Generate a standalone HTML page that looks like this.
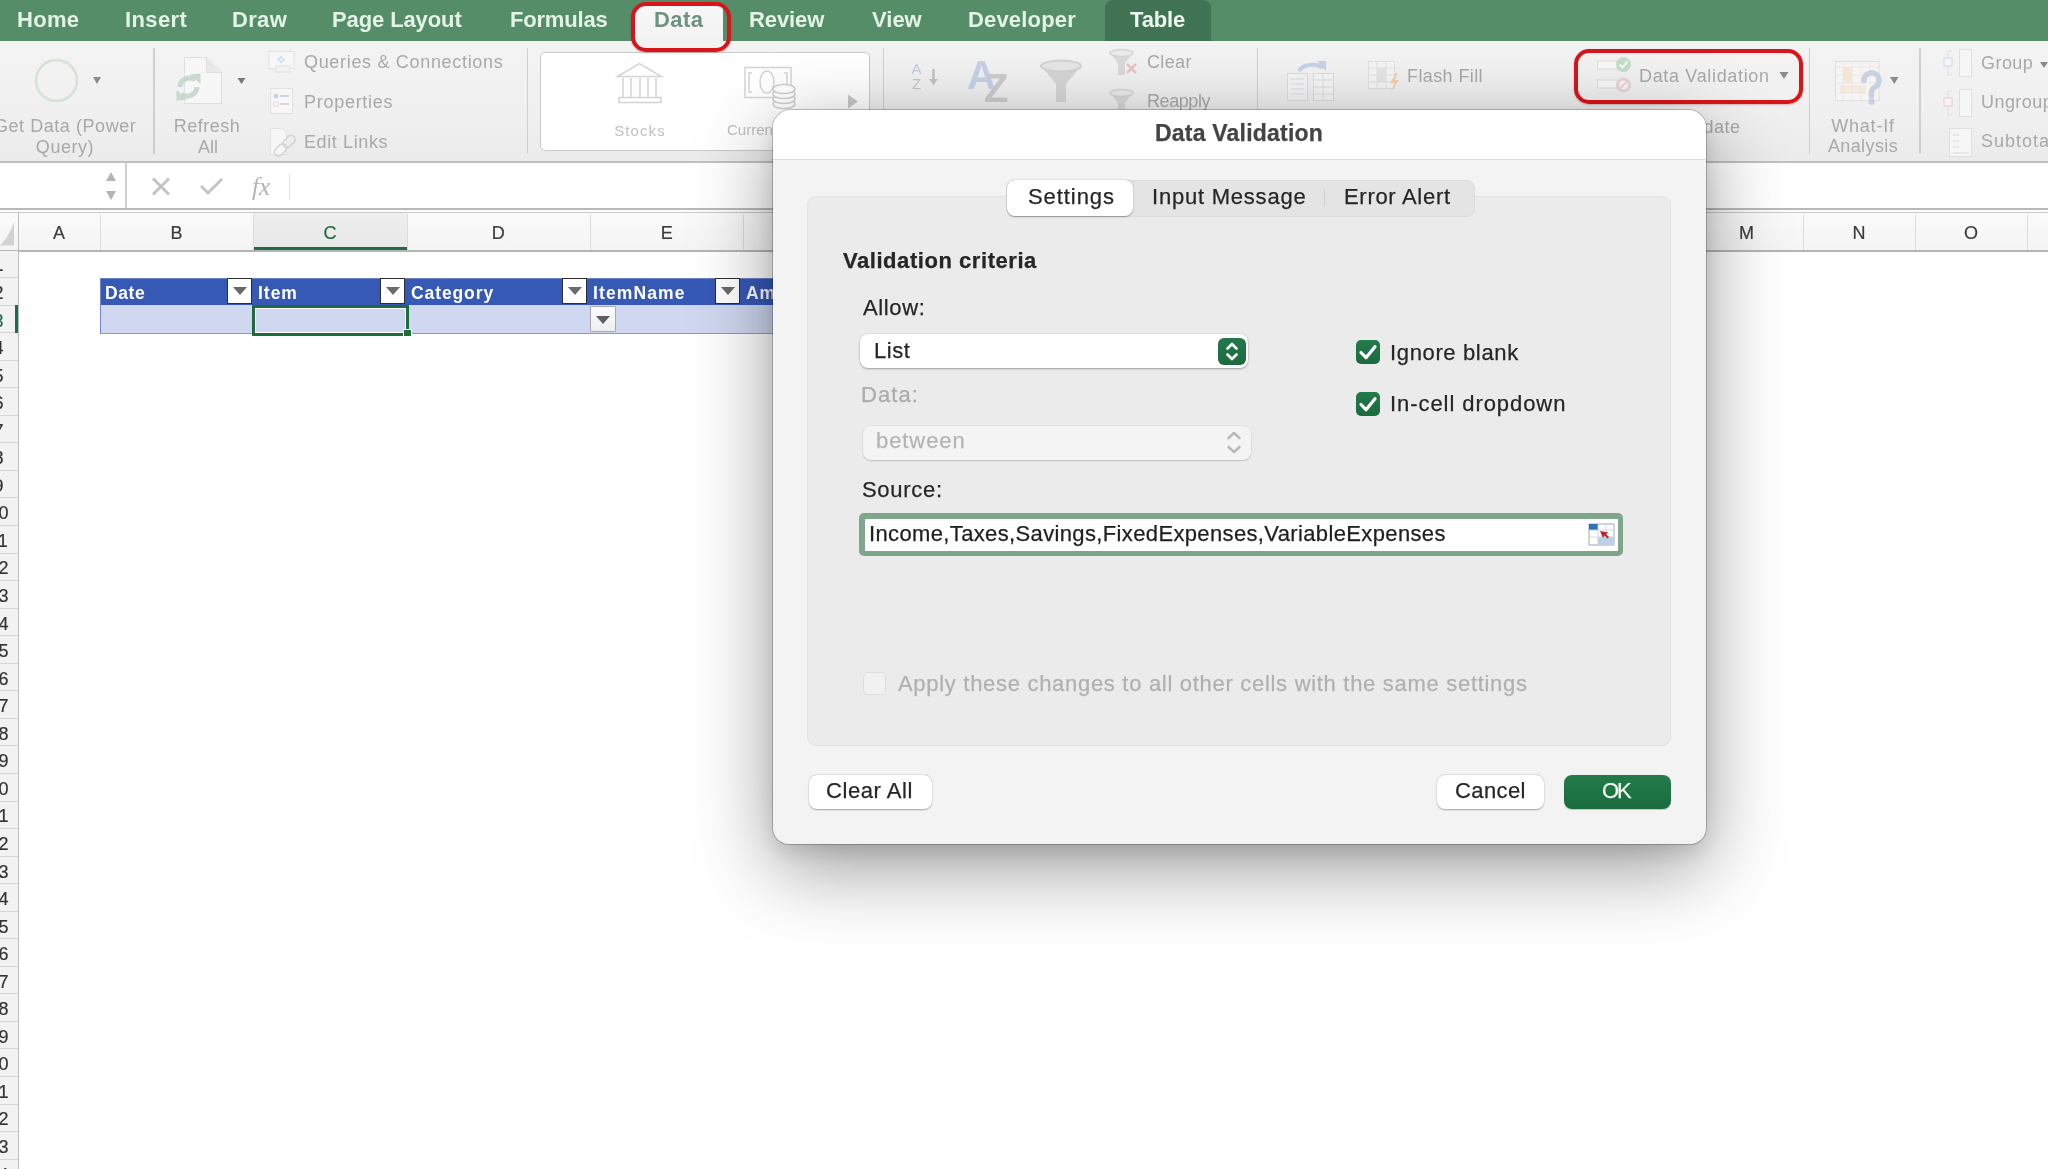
<!DOCTYPE html>
<html><head><meta charset="utf-8">
<style>
*{margin:0;padding:0;box-sizing:border-box}
html,body{width:2048px;height:1169px;overflow:hidden;background:#fff;font-family:"Liberation Sans",sans-serif}
.a{position:absolute}
.t{position:absolute;line-height:1;white-space:nowrap;will-change:transform}
#tabbar{left:0;top:0;width:2048px;height:41px;background:#558d69}
.tab{font-size:22px;font-weight:bold;color:#e3f3e6;top:8px}
#ribbon{left:0;top:41px;width:2048px;height:122px;background:linear-gradient(#f3f3f3,#f0f0f0 60%,#ebebeb);border-bottom:2px solid #c0c0c0}
.rl{font-size:18px;color:#a9a9a9}
.sep{position:absolute;width:1.5px;background:#cfcfcf}
#fbar{left:0;top:163px;width:2048px;height:46px;background:#fff}
#colhdr{left:0;top:208px;width:2048px;height:43px;background:linear-gradient(#fbfbfb,#f4f4f4);border-top:2px solid #b9b9b9}
.ch{font-size:18px;color:#3c3c3c;top:224px;-webkit-text-stroke:0.2px currentColor}
.csep{position:absolute;top:214px;height:36px;width:1px;background:#dcdcdc}
.rh{font-size:18px;color:#3c3c3c;-webkit-text-stroke:0.2px currentColor}
.th{font-size:17.5px;font-weight:bold;color:#fff;top:284px}
.fb{position:absolute;top:278px;width:25px;height:25.5px;background:#fff;border:1.2px solid #2e2e2e}
.fb:after{content:"";position:absolute;left:5px;top:8px;border-left:7px solid transparent;border-right:7px solid transparent;border-top:8px solid #6a6a6a}
.dt{font-size:22px;color:#262626;-webkit-text-stroke:0.25px currentColor}
.cb{position:absolute;width:24px;height:24px;border-radius:5px;background:linear-gradient(#237b4a,#1b6a3d)}
.btn{position:absolute;top:775px;height:34px;background:#fff;border-radius:8px;box-shadow:0 0.5px 1.5px rgba(0,0,0,.3),0 0 0 0.5px rgba(0,0,0,.06)}
</style></head><body>

<!-- TAB BAR -->
<div class="a" id="tabbar"></div>
<div class="a" style="left:1105px;top:0;width:106px;height:41px;background:#3f7353;border-radius:8px 8px 0 0"></div>
<div class="a" style="left:635px;top:3px;width:88px;height:45px;background:linear-gradient(#f8f8f8,#f1f1f1);border-radius:8px 8px 0 0"></div>
<div class="t tab" id="tHome" style="left:17.40px;top:8.68px;letter-spacing:0.30px">Home</div>
<div class="t tab" id="tInsert" style="left:125.30px;top:8.68px;letter-spacing:0.40px">Insert</div>
<div class="t tab" id="tDraw" style="left:232.00px;top:8.68px;letter-spacing:0.33px">Draw</div>
<div class="t tab" id="tPage" style="left:332.30px;top:8.68px;letter-spacing:-0.11px">Page Layout</div>
<div class="t tab" id="tForm" style="left:509.50px;top:8.68px;letter-spacing:-0.19px">Formulas</div>
<div class="t tab" id="tData" style="left:653.50px;color:#6d9280;top:8.68px;letter-spacing:0.43px">Data</div>
<div class="t tab" id="tRev" style="left:748.50px;top:8.68px;letter-spacing:-0.10px">Review</div>
<div class="t tab" id="tView" style="left:871.60px;top:8.68px;letter-spacing:0.00px">View</div>
<div class="t tab" id="tDev" style="left:968.30px;top:8.68px;letter-spacing:0.17px">Developer</div>
<div class="t tab" id="tTable" style="left:1129.90px;color:#ecf8ef;top:8.68px;letter-spacing:-0.15px">Table</div>

<!-- RIBBON -->
<div class="a" id="ribbon"></div>
<div class="sep" style="left:153px;top:48px;height:106px"></div>
<div class="sep" style="left:526.5px;top:48px;height:106px"></div>
<div class="sep" style="left:882.5px;top:48px;height:106px"></div>
<div class="sep" style="left:1256.5px;top:48px;height:106px"></div>
<div class="sep" style="left:1808.5px;top:48px;height:106px"></div>
<div class="sep" style="left:1919px;top:48px;height:106px"></div>
<div class="a" style="left:540px;top:52px;width:330px;height:99px;background:#fff;border:1.5px solid #cacaca;border-radius:5px"></div>
<svg class="a" style="left:0;top:0" width="2048" height="163" viewBox="0 0 2048 163">
 <!-- get data circle -->
 <circle cx="56.5" cy="80.5" r="20.5" fill="none" stroke="#d3e3d6" stroke-width="2.5"/>
 <path d="M93 77h8l-4 7z" fill="#8a8a8a"/>
 <!-- refresh doc -->
 <path d="M184.5 57.5h22l15 15v31h-37z" fill="#f7f7f7" stroke="#dedede" stroke-width="1"/>
 <path d="M206.5 57.5v15h15" fill="#e9e9e9" stroke="#dedede" stroke-width="1"/>
 <path d="M180 87a10 9 0 0 1 15.5-7.5" stroke="#c9d9cd" stroke-width="5" fill="none"/><path d="M190 74.5l10.5-1v10.5z" fill="#c9d9cd"/>
 <path d="M197 87a10 9 0 0 1-15.5 7.5" stroke="#c9d9cd" stroke-width="5" fill="none"/><path d="M187 99.5l-10.5 1v-10.5z" fill="#c9d9cd"/>
 <path d="M237.5 78h8l-4 6z" fill="#7a7a7a"/>
 <!-- queries icon -->
 <rect x="269" y="51.5" width="25" height="17" fill="#f7f7f7" stroke="#e1e1e1"/>
 <rect x="276" y="66" width="14" height="6" fill="#f3f3f3" stroke="#e1e1e1"/>
 <path d="M281 55.5l4 4-4 4-4-4z" fill="#cfdcec"/><circle cx="281" cy="59.5" r="2" fill="#e6edf6"/>
 <!-- properties -->
 <rect x="270.5" y="88.5" width="22" height="25" fill="#f7f7f7" stroke="#e1e1e1"/>
 <circle cx="276" cy="96" r="2.5" fill="#c9d2e2"/><rect x="280" y="95" width="9" height="2" fill="#ccd5e6"/>
 <circle cx="276" cy="104" r="2.5" fill="none" stroke="#dcdcdc"/><rect x="280" y="103" width="9" height="2" fill="#e2d8d0"/>
 <!-- edit links -->
 <path d="M270.5 128.5h11l5 5v21h-16z" fill="#f7f7f7" stroke="#e1e1e1"/>
 <rect x="276.5" y="143" width="8" height="14" rx="4" transform="rotate(45 280.5 150)" fill="none" stroke="#d3d3d3" stroke-width="1.6"/>
 <rect x="285" y="134.5" width="8" height="14" rx="4" transform="rotate(45 289 141.5)" fill="none" stroke="#d3d3d3" stroke-width="1.6"/>
 <!-- stocks bank -->
 <g fill="none" stroke="#d4d4d4" stroke-width="1.5">
  <path d="M617.5 76.5l22-13 22 13z"/>
  <path d="M623 78v19M631 78v19M640 78v19M648 78v19M656 78v19"/>
  <path d="M619 97.5h42v5h-42z"/>
 </g>
 <!-- currency -->
 <g fill="none" stroke="#d4d4d4" stroke-width="1.5">
  <rect x="745" y="67.5" width="46" height="30"/>
  <path d="M752 73h-3v19h3M784 73h3v19h-3"/>
  <ellipse cx="767" cy="82" rx="7" ry="11"/>
 </g>
 <g fill="#fff" stroke="#cfcfcf" stroke-width="1.5">
  <ellipse cx="784" cy="104" rx="11" ry="4.5"/>
  <ellipse cx="784" cy="99" rx="11" ry="4.5"/>
  <ellipse cx="784" cy="94" rx="11" ry="4.5"/>
  <ellipse cx="784" cy="89" rx="11" ry="4.5"/>
 </g>
 <path d="M848 94.5l10 7-10 7z" fill="#c9c9c9"/>
 <!-- sort small -->
 <text x="911.5" y="73.5" font-family="Liberation Sans" font-size="15" fill="#bfcbe0">A</text>
 <text x="912" y="89" font-family="Liberation Sans" font-size="15" fill="#c6c6c6">Z</text>
 <path d="M933.5 69v12" stroke="#c2c2c2" stroke-width="2.5"/><path d="M929 79h9l-4.5 6z" fill="#c2c2c2"/>
 <!-- sort big -->
 <text x="967" y="89" font-family="Liberation Sans" font-weight="bold" font-size="40" fill="#c6d2e7">A</text>
 <text x="984" y="101.5" font-family="Liberation Sans" font-weight="bold" font-size="40" fill="#cdcdcd">Z</text>
 <!-- funnel big -->
 <path d="M1041 66a20 5.5 0 0 0 40 0l-15 18v18h-10v-18z" fill="#d6d6d6"/>
 <ellipse cx="1061" cy="66" rx="20" ry="5.5" fill="#e6e6e6" stroke="#d2d2d2" stroke-width="2"/>
 <!-- funnel clear -->
 <path d="M1110 53a11.5 3.5 0 0 0 23 0l-8 10v12h-7v-12z" fill="#d9d9d9"/>
 <ellipse cx="1121.5" cy="53" rx="11.5" ry="3.5" fill="#ebebeb" stroke="#d6d6d6" stroke-width="1.5"/>
 <path d="M1127 64l9 9M1136 64l-9 9" stroke="#e8c4c6" stroke-width="2.5"/>
 <!-- funnel reapply -->
 <path d="M1110 93a11.5 3.5 0 0 0 23 0l-8 10v6h-7v-6z" fill="#d9d9d9"/>
 <ellipse cx="1121.5" cy="93" rx="11.5" ry="3.5" fill="#ebebeb" stroke="#d6d6d6" stroke-width="1.5"/>
 <!-- text to columns -->
 <path d="M1299 71a14 9 0 0 1 24 -3" fill="none" stroke="#c6d3e6" stroke-width="4"/>
 <path d="M1317 61h9v10z" fill="#c6d3e6"/>
 <rect x="1287.5" y="73.5" width="20" height="27" fill="#f6f6f6" stroke="#dcdcdc"/>
 <path d="M1291 79h13M1291 84h13M1291 89h13M1291 94h13" stroke="#d5dde8" stroke-width="1"/>
 <rect x="1313.5" y="73.5" width="20" height="27" fill="#f6f6f6" stroke="#dcdcdc"/>
 <path d="M1313 80h20M1313 87h20M1313 94h20M1323 74v27" stroke="#dedede" stroke-width="1"/>
 <!-- flash fill -->
 <rect x="1368.5" y="61.5" width="26" height="27" fill="#f6f6f6" stroke="#dfdfdf"/>
 <path d="M1368 68h26M1368 75h26M1368 82h26M1377 61v28M1386 61v28" stroke="#e1e1e1"/>
 <rect x="1377" y="68" width="9" height="14" fill="#e4e4e4"/>
 <path d="M1396 73l-6 10h4l-3 9 8-12h-4l3-7z" fill="#f1d2b0"/>
 <!-- data validation icon -->
 <rect x="1597.5" y="61" width="20" height="8" fill="#f8f8f8" stroke="#dedede"/>
 <rect x="1597.5" y="80" width="20" height="8" fill="#f8f8f8" stroke="#dedede"/>
 <circle cx="1623.5" cy="64.5" r="7.5" fill="#c6ddc9"/>
 <path d="M1619.5 64.5l3 3 5-6" stroke="#f4f8f4" stroke-width="2" fill="none"/>
 <circle cx="1623.5" cy="85" r="7.5" fill="#ead4d6"/>
 <circle cx="1623.5" cy="85" r="4.5" fill="#f7f7f7"/>
 <path d="M1620 88.5l7-7" stroke="#ead4d6" stroke-width="2"/>
 <path d="M1779.5 72h9l-4.5 7z" fill="#8a8a8a"/>
 <!-- what-if -->
 <rect x="1835.5" y="61.5" width="43.5" height="39" fill="#f7f5f3" stroke="#dedede"/>
 <rect x="1843" y="67" width="9" height="16" fill="#f4e6d6"/>
 <rect x="1840" y="85" width="26" height="8" fill="#f4e9dd"/>
 <path d="M1835 67h44M1835 75h44M1835 83h44M1835 93h44M1843 61v39M1852 61v39M1861 61v39M1870 61v39" stroke="#ebe6e1" stroke-width="0.8"/>
 <path d="M1864 80.5a7.5 7.5 0 1 1 11 6.5q-3.5 2.2-3.5 6v3" fill="none" stroke="#c7d1e1" stroke-width="5.5" stroke-linecap="round"/>
 <circle cx="1871.5" cy="101.5" r="3.2" fill="#c7d1e1"/>
 <path d="M1890 77h8.5l-4.2 7z" fill="#8a8a8a"/>
 <!-- group -->
 <rect x="1959.5" y="49.5" width="12" height="27" fill="#f6f6f6" stroke="#e0e0e0"/>
 <path d="M1952 51h-4v24h4" fill="none" stroke="#dfdfdf"/>
 <rect x="1944" y="58" width="8" height="8" fill="#f3f6fb" stroke="#cbd7e8"/>
 <rect x="1959.5" y="89.5" width="12" height="27" fill="#f6f6f6" stroke="#e0e0e0"/>
 <path d="M1952 91h-4v24h4" fill="none" stroke="#dfdfdf"/>
 <rect x="1944" y="98" width="8" height="8" fill="#fbf3f3" stroke="#e8c9ca"/>
 <rect x="1949.5" y="128.5" width="22" height="28" fill="#f6f6f6" stroke="#e0e0e0"/>
 <path d="M1953 135h6M1953 141h6M1953 147h6M1953 153h16" stroke="#d8d8d8"/>
 <path d="M2040 62h8l-4 6z" fill="#8a8a8a"/>
</svg>
<div class="t rl" id="rGet1" style="left:-6.3px;top:117.3px;width:142px;text-align:center;letter-spacing:0.55px">Get Data (Power</div>
<div class="t rl" id="rGet2" style="left:-6.3px;top:137.6px;width:142px;text-align:center;letter-spacing:0.55px">Query)</div>
<div class="t rl" id="rRef1" style="left:157.19px;top:117.10px;width:100px;text-align:center;letter-spacing:0.52px">Refresh</div>
<div class="t rl" id="rRef2" style="left:158.00px;top:137.60px;width:100px;text-align:center;letter-spacing:0.00px">All</div>
<div class="t rl" id="rQ" style="left:303.50px;top:53.40px;letter-spacing:0.68px">Queries &amp; Connections</div>
<div class="t rl" id="rP" style="left:303.50px;top:92.80px;letter-spacing:0.72px">Properties</div>
<div class="t rl" id="rE" style="left:303.50px;top:132.50px;letter-spacing:0.61px">Edit Links</div>
<div class="t rl" id="rStocks" style="left:590.00px;top:123.10px;width:100px;text-align:center;font-size:15px;color:#bfbfbf;letter-spacing:1.10px">Stocks</div>
<div class="t rl" id="rCurr" style="left:727px;top:122px;font-size:15px;color:#bfbfbf">Currencies</div>
<div class="t rl" id="rClear" style="left:1146.60px;top:53.40px;letter-spacing:0.35px">Clear</div>
<div class="t rl" id="rReapply" style="left:1147px;top:92.40px;letter-spacing:-0.43px">Reapply</div>
<div class="t rl" id="rFlash" style="left:1406.80px;top:67.40px;letter-spacing:0.40px">Flash Fill</div>
<div class="t rl" id="rDV" style="left:1638.70px;top:67.00px;letter-spacing:0.66px">Data Validation</div>
<div class="t rl" id="rCons" style="left:1639.7px;top:118.3px;letter-spacing:0.5px">Consolidate</div>
<div class="t rl" id="rWI1" style="left:1813.20px;top:116.80px;width:100px;text-align:center;letter-spacing:0.80px">What-If</div>
<div class="t rl" id="rWI2" style="left:1813.40px;top:137.30px;width:100px;text-align:center;letter-spacing:0.40px">Analysis</div>
<div class="t rl" id="rGroup" style="left:1980.60px;top:53.70px;letter-spacing:0.45px">Group</div>
<div class="t rl" id="rUngroup" style="left:1981px;top:93.4px;letter-spacing:0.45px">Ungroup</div>
<div class="t rl" id="rSub" style="left:1981px;top:132.3px;letter-spacing:1px">Subtotal</div>
<!-- red outlines -->
<div class="a" style="left:631px;top:2px;width:100px;height:50px;border:4px solid #d9141a;border-radius:15px;box-shadow:0 1px 2px rgba(120,0,0,.25)"></div>
<div class="a" style="left:1574px;top:49px;width:229px;height:55px;border:4px solid #d9141a;border-radius:15px;box-shadow:0 1px 2px rgba(120,0,0,.25)"></div>

<!-- FORMULA BAR -->
<div class="a" id="fbar"></div>
<div class="a" style="left:125px;top:163px;width:2px;height:46px;background:#cfcfcf"></div>
<svg class="a" style="left:0;top:163px" width="300" height="46" viewBox="0 163 300 46">
 <path d="M106 181l5-9 5 9z" fill="#b4b4b4"/>
 <path d="M106 191h10l-5 9z" fill="#b4b4b4"/>
 <path d="M153 178.5l16 16M169 178.5l-16 16" stroke="#c4c4c4" stroke-width="3"/>
 <path d="M201 186l7 7 14-14" fill="none" stroke="#c4c4c4" stroke-width="3"/>
 <text x="252" y="195" font-family="Liberation Serif" font-style="italic" font-size="25" fill="#b3b3b3">fx</text>
 <rect x="289" y="174" width="1.2" height="26" fill="#e0e0e0"/>
</svg>

<!-- COLUMN HEADERS -->
<div class="a" id="colhdr"></div>
<div class="a" style="left:0;top:211.5px;width:2048px;height:1.5px;background:#c9c9c9"></div>
<div class="a" style="left:253px;top:213px;width:154px;height:37px;background:linear-gradient(#eeeeee,#e8e8e8)"></div>
<div class="a" style="left:253px;top:247px;width:154px;height:3.5px;background:#1f6e43"></div>
<div class="a" style="left:0;top:249.5px;width:2048px;height:2px;background:#b5b5b5"></div>
<svg class="a" style="left:0;top:213px" width="20" height="40"><path d="M0 32.5Q9 24 14 9v23.5z" fill="#d2d2d2"/></svg>
<div class="a" style="left:17.5px;top:213px;width:1.5px;height:956px;background:#bdbdbd"></div>
<div class="csep" style="left:100px"></div>
<div class="t ch" id="cA" style="left:18px;width:82px;text-align:center;color:#3c3c3c">A</div>
<div class="csep" style="left:253px"></div>
<div class="t ch" id="cB" style="left:100px;width:153px;text-align:center;color:#3c3c3c">B</div>
<div class="csep" style="left:407px"></div>
<div class="t ch" id="cC" style="left:253px;width:154px;text-align:center;color:#1f6e43">C</div>
<div class="csep" style="left:589.5px"></div>
<div class="t ch" id="cD" style="left:407px;width:182.5px;text-align:center;color:#3c3c3c">D</div>
<div class="csep" style="left:743px"></div>
<div class="t ch" id="cE" style="left:589.5px;width:153.5px;text-align:center;color:#3c3c3c">E</div>
<div class="csep" style="left:900px"></div>
<div class="t ch" id="cF" style="left:743px;width:157px;text-align:center;color:#3c3c3c">F</div>
<div class="csep" style="left:1803px"></div>
<div class="t ch" id="cM" style="left:1690px;width:113px;text-align:center;color:#3c3c3c">M</div>
<div class="csep" style="left:1915px"></div>
<div class="t ch" id="cN" style="left:1803px;width:112px;text-align:center;color:#3c3c3c">N</div>
<div class="csep" style="left:2027px"></div>
<div class="t ch" id="cO" style="left:1915px;width:112px;text-align:center;color:#3c3c3c">O</div>
<div class="csep" style="left:2140px"></div>
<div class="t ch" id="cP" style="left:2027px;width:113px;text-align:center;color:#3c3c3c">P</div>
<div class="a" style="left:0;top:251px;width:17.5px;height:918px;background:#f2f2f2"></div>
<div class="a" style="left:0;top:277.05px;width:17.5px;height:1px;background:#d6d6d6"></div>
<div class="t rh" style="left:-20.5px;top:256.43px;width:37px;text-align:center;color:#333">1</div>
<div class="a" style="left:0;top:304.60px;width:17.5px;height:1px;background:#d6d6d6"></div>
<div class="t rh" style="left:-20.5px;top:283.99px;width:37px;text-align:center;color:#333">2</div>
<div class="a" style="left:0;top:332.15px;width:17.5px;height:1px;background:#d6d6d6"></div>
<div class="t rh" style="left:-20.5px;top:311.54px;width:37px;text-align:center;color:#1f6e43">3</div>
<div class="a" style="left:0;top:359.70px;width:17.5px;height:1px;background:#d6d6d6"></div>
<div class="t rh" style="left:-20.5px;top:339.08px;width:37px;text-align:center;color:#333">4</div>
<div class="a" style="left:0;top:387.25px;width:17.5px;height:1px;background:#d6d6d6"></div>
<div class="t rh" style="left:-20.5px;top:366.63px;width:37px;text-align:center;color:#333">5</div>
<div class="a" style="left:0;top:414.80px;width:17.5px;height:1px;background:#d6d6d6"></div>
<div class="t rh" style="left:-20.5px;top:394.18px;width:37px;text-align:center;color:#333">6</div>
<div class="a" style="left:0;top:442.35px;width:17.5px;height:1px;background:#d6d6d6"></div>
<div class="t rh" style="left:-20.5px;top:421.74px;width:37px;text-align:center;color:#333">7</div>
<div class="a" style="left:0;top:469.90px;width:17.5px;height:1px;background:#d6d6d6"></div>
<div class="t rh" style="left:-20.5px;top:449.29px;width:37px;text-align:center;color:#333">8</div>
<div class="a" style="left:0;top:497.45px;width:17.5px;height:1px;background:#d6d6d6"></div>
<div class="t rh" style="left:-20.5px;top:476.83px;width:37px;text-align:center;color:#333">9</div>
<div class="a" style="left:0;top:525.00px;width:17.5px;height:1px;background:#d6d6d6"></div>
<div class="t rh" style="left:-20.5px;top:504.39px;width:37px;text-align:center;color:#333">10</div>
<div class="a" style="left:0;top:552.55px;width:17.5px;height:1px;background:#d6d6d6"></div>
<div class="t rh" style="left:-20.5px;top:531.93px;width:37px;text-align:center;color:#333">11</div>
<div class="a" style="left:0;top:580.10px;width:17.5px;height:1px;background:#d6d6d6"></div>
<div class="t rh" style="left:-20.5px;top:559.48px;width:37px;text-align:center;color:#333">12</div>
<div class="a" style="left:0;top:607.65px;width:17.5px;height:1px;background:#d6d6d6"></div>
<div class="t rh" style="left:-20.5px;top:587.04px;width:37px;text-align:center;color:#333">13</div>
<div class="a" style="left:0;top:635.20px;width:17.5px;height:1px;background:#d6d6d6"></div>
<div class="t rh" style="left:-20.5px;top:614.59px;width:37px;text-align:center;color:#333">14</div>
<div class="a" style="left:0;top:662.75px;width:17.5px;height:1px;background:#d6d6d6"></div>
<div class="t rh" style="left:-20.5px;top:642.14px;width:37px;text-align:center;color:#333">15</div>
<div class="a" style="left:0;top:690.30px;width:17.5px;height:1px;background:#d6d6d6"></div>
<div class="t rh" style="left:-20.5px;top:669.68px;width:37px;text-align:center;color:#333">16</div>
<div class="a" style="left:0;top:717.85px;width:17.5px;height:1px;background:#d6d6d6"></div>
<div class="t rh" style="left:-20.5px;top:697.23px;width:37px;text-align:center;color:#333">17</div>
<div class="a" style="left:0;top:745.40px;width:17.5px;height:1px;background:#d6d6d6"></div>
<div class="t rh" style="left:-20.5px;top:724.79px;width:37px;text-align:center;color:#333">18</div>
<div class="a" style="left:0;top:772.95px;width:17.5px;height:1px;background:#d6d6d6"></div>
<div class="t rh" style="left:-20.5px;top:752.34px;width:37px;text-align:center;color:#333">19</div>
<div class="a" style="left:0;top:800.50px;width:17.5px;height:1px;background:#d6d6d6"></div>
<div class="t rh" style="left:-20.5px;top:779.89px;width:37px;text-align:center;color:#333">20</div>
<div class="a" style="left:0;top:828.05px;width:17.5px;height:1px;background:#d6d6d6"></div>
<div class="t rh" style="left:-20.5px;top:807.43px;width:37px;text-align:center;color:#333">21</div>
<div class="a" style="left:0;top:855.60px;width:17.5px;height:1px;background:#d6d6d6"></div>
<div class="t rh" style="left:-20.5px;top:834.99px;width:37px;text-align:center;color:#333">22</div>
<div class="a" style="left:0;top:883.15px;width:17.5px;height:1px;background:#d6d6d6"></div>
<div class="t rh" style="left:-20.5px;top:862.54px;width:37px;text-align:center;color:#333">23</div>
<div class="a" style="left:0;top:910.70px;width:17.5px;height:1px;background:#d6d6d6"></div>
<div class="t rh" style="left:-20.5px;top:890.08px;width:37px;text-align:center;color:#333">24</div>
<div class="a" style="left:0;top:938.25px;width:17.5px;height:1px;background:#d6d6d6"></div>
<div class="t rh" style="left:-20.5px;top:917.64px;width:37px;text-align:center;color:#333">25</div>
<div class="a" style="left:0;top:965.80px;width:17.5px;height:1px;background:#d6d6d6"></div>
<div class="t rh" style="left:-20.5px;top:945.18px;width:37px;text-align:center;color:#333">26</div>
<div class="a" style="left:0;top:993.35px;width:17.5px;height:1px;background:#d6d6d6"></div>
<div class="t rh" style="left:-20.5px;top:972.74px;width:37px;text-align:center;color:#333">27</div>
<div class="a" style="left:0;top:1020.90px;width:17.5px;height:1px;background:#d6d6d6"></div>
<div class="t rh" style="left:-20.5px;top:1000.29px;width:37px;text-align:center;color:#333">28</div>
<div class="a" style="left:0;top:1048.45px;width:17.5px;height:1px;background:#d6d6d6"></div>
<div class="t rh" style="left:-20.5px;top:1027.83px;width:37px;text-align:center;color:#333">29</div>
<div class="a" style="left:0;top:1076.00px;width:17.5px;height:1px;background:#d6d6d6"></div>
<div class="t rh" style="left:-20.5px;top:1055.39px;width:37px;text-align:center;color:#333">30</div>
<div class="a" style="left:0;top:1103.55px;width:17.5px;height:1px;background:#d6d6d6"></div>
<div class="t rh" style="left:-20.5px;top:1082.93px;width:37px;text-align:center;color:#333">31</div>
<div class="a" style="left:0;top:1131.10px;width:17.5px;height:1px;background:#d6d6d6"></div>
<div class="t rh" style="left:-20.5px;top:1110.49px;width:37px;text-align:center;color:#333">32</div>
<div class="a" style="left:0;top:1158.65px;width:17.5px;height:1px;background:#d6d6d6"></div>
<div class="t rh" style="left:-20.5px;top:1138.03px;width:37px;text-align:center;color:#333">33</div>
<div class="a" style="left:0;top:1186.20px;width:17.5px;height:1px;background:#d6d6d6"></div>
<div class="t rh" style="left:-20.5px;top:1165.59px;width:37px;text-align:center;color:#333">34</div>
<div class="a" style="left:14.5px;top:305px;width:3.5px;height:28px;background:#1f6e43"></div>


<!-- TABLE -->
<div class="a" style="left:100px;top:277.5px;width:680px;height:27.5px;background:#3759b6;border-top:1px solid #6b85c9"></div>
<div class="a" style="left:100px;top:305px;width:680px;height:28.5px;background:#cfd8f0;border-bottom:1.5px solid #8a9acf;border-left:1px solid #8a9acf"></div>
<div class="a" style="left:99.5px;top:277.5px;width:1.5px;height:56px;background:#6f86cc"></div>
<div class="t th" id="hDate" style="left:105.20px;top:284.90px;letter-spacing:0.60px">Date</div>
<div class="t th" id="hItem" style="left:258.40px;top:284.90px;letter-spacing:0.97px">Item</div>
<div class="t th" id="hCat" style="left:411px;top:284.9px;letter-spacing:0.9px">Category</div>
<div class="t th" id="hIN" style="left:592.90px;top:284.90px;letter-spacing:1.11px">ItemName</div>
<div class="t th" id="hAm" style="left:746px;top:284.9px;letter-spacing:0.9px">Amount</div>
<div class="fb" style="left:226.5px"></div>
<div class="fb" style="left:379.5px"></div>
<div class="fb" style="left:561.5px"></div>
<div class="fb" style="left:715px"></div>
<div class="a" style="left:589.5px;top:305.5px;width:26px;height:26px;background:linear-gradient(#fbfbfb,#eeeeee);border:1px solid #a9a9a9;border-radius:1px"></div>
<svg class="a" style="left:589.5px;top:305.5px" width="26" height="26"><path d="M6 10h14l-7 8z" fill="#5e5e5e"/></svg>
<div class="a" style="left:251.5px;top:304.5px;width:157px;height:31px;border:3px solid #1e6b3c"></div>
<div class="a" style="left:254.5px;top:307.5px;width:151px;height:25px;border:1px solid #fff"></div>
<div class="a" style="left:402.5px;top:329px;width:9px;height:8px;background:#1e6b3c;border:1px solid #fff"></div>

<!-- DIALOG -->
<div class="a" id="dlg" style="left:772.5px;top:109.5px;width:933px;height:734px;background:#f3f3f3;border-radius:18px 18px 16px 16px;box-shadow:0 24px 80px rgba(0,0,0,.4),0 8px 20px rgba(0,0,0,.11),0 0 0 1px rgba(0,0,0,.22);overflow:hidden">
 <div class="a" style="left:0;top:0;width:933px;height:50px;background:#fff;border-bottom:1.5px solid #d9d9d9"></div>
</div>
<div class="t dt" id="dTitle" style="left:1155.1px;top:121.8px;font-size:23px;letter-spacing:0.21px;font-weight:bold;color:#444">Data Validation</div>
<div class="a" style="left:807px;top:196px;width:863.5px;height:550px;background:#ebebeb;border-radius:9px;box-shadow:inset 0 0 0 1px #e4e4e4"></div>
<!-- segmented -->
<div class="a" style="left:1006px;top:179.5px;width:469px;height:37px;background:#e4e4e4;border-radius:9px;box-shadow:inset 0 0 0 1px #dcdcdc"></div>
<div class="a" style="left:1006.5px;top:180px;width:126.5px;height:35.5px;background:#fff;border-radius:8px;box-shadow:0 0.5px 1.5px rgba(0,0,0,.35)"></div>
<div class="a" style="left:1323.5px;top:189px;width:1.5px;height:17px;background:#d0d0d0"></div>
<div class="t dt" id="sSet" style="left:1027.80px;top:186.10px;letter-spacing:0.93px">Settings</div>
<div class="t dt" id="sIn" style="left:1152.10px;top:186.10px;letter-spacing:0.78px">Input Message</div>
<div class="t dt" id="sErr" style="left:1344.20px;top:186.10px;letter-spacing:0.70px">Error Alert</div>
<div class="t dt" id="dVC" style="left:843.20px;top:250.00px;font-weight:bold;color:#262626;letter-spacing:0.55px">Validation criteria</div>
<div class="t dt" id="dAllow" style="left:863.30px;top:296.80px;letter-spacing:0.64px">Allow:</div>
<!-- List popup -->
<div class="a" style="left:860px;top:333.5px;width:388px;height:34.5px;background:#fff;border-radius:8px;box-shadow:0 1px 2px rgba(0,0,0,.3),0 0 0 0.5px rgba(0,0,0,.08)"></div>
<div class="t dt" id="dList" style="left:874.00px;top:339.80px;letter-spacing:0.57px">List</div>
<div class="a" style="left:1218px;top:338px;width:28px;height:27px;background:linear-gradient(#23794a,#1b6a3d);border-radius:6px"></div>
<svg class="a" style="left:1218px;top:338px" width="28" height="27"><path d="M9.5 10.5l4.5-4.5 4.5 4.5M9.5 16.5l4.5 4.5 4.5-4.5" fill="none" stroke="#f4fbf6" stroke-width="2.8" stroke-linecap="round" stroke-linejoin="round"/></svg>
<div class="t dt" id="dData" style="left:861.00px;top:384.40px;color:#ababab;letter-spacing:1.05px">Data:</div>
<!-- between popup -->
<div class="a" style="left:862.5px;top:425.5px;width:388px;height:34px;background:#f4f4f4;border-radius:8px;box-shadow:0 1px 1.5px rgba(0,0,0,.16),0 0 0 0.5px rgba(0,0,0,.06)"></div>
<div class="t dt" id="dBetween" style="left:876.00px;top:430.40px;color:#b4b4b4;letter-spacing:0.92px">between</div>
<svg class="a" style="left:1220px;top:428px" width="28" height="30"><path d="M8.5 10l5.5-5 5.5 5M8.5 19l5.5 5 5.5-5" fill="none" stroke="#bababa" stroke-width="2.6" stroke-linecap="round" stroke-linejoin="round"/></svg>
<!-- checkboxes -->
<div class="cb" style="left:1356px;top:340px"><svg class="a" style="left:0;top:0" width="24" height="24"><path d="M5 12.5l5 5.2 9-11" fill="none" stroke="#fff" stroke-width="3.2" stroke-linecap="round" stroke-linejoin="round"/></svg></div>
<div class="cb" style="left:1356px;top:391.5px"><svg class="a" style="left:0;top:0" width="24" height="24"><path d="M5 12.5l5 5.2 9-11" fill="none" stroke="#fff" stroke-width="3.2" stroke-linecap="round" stroke-linejoin="round"/></svg></div>
<div class="t dt" id="dIgn" style="left:1390.40px;top:342.00px;letter-spacing:0.64px">Ignore blank</div>
<div class="t dt" id="dInc" style="left:1390.40px;top:393.10px;letter-spacing:0.93px">In-cell dropdown</div>
<div class="t dt" id="dSrc" style="left:862.00px;top:478.70px;letter-spacing:0.70px">Source:</div>
<!-- source field -->
<div class="a" style="left:859px;top:513px;width:763.5px;height:43px;background:#7ea68a;border-radius:5px"></div>
<div class="a" style="left:864.5px;top:519px;width:753px;height:31.5px;background:#fff"></div>
<div class="t dt" id="dSrcTxt" style="left:869.30px;top:523.30px;color:#1f1f1f;letter-spacing:0.36px">Income,Taxes,Savings,FixedExpenses,VariableExpenses</div>
<svg class="a" style="left:1588px;top:523px" width="28" height="24" viewBox="0 0 28 24">
 <rect x="1" y="1" width="25" height="21" fill="#fff" stroke="#9ea9b6" stroke-width="1"/>
 <rect x="1" y="1" width="9" height="6" fill="#2f6fc0"/>
 <rect x="10" y="14" width="16" height="8" fill="#bcd0e8"/>
 <path d="M1 7h25M1 14h25M10 1v21M18 1v21" stroke="#c6d0dc" stroke-width="0.8"/>
 <path d="M12 8l3 7 1.5-2.5 3 3 1.5-1.5-3-3 2.5-1.5z" fill="#c4222a"/>
</svg>
<!-- apply -->
<div class="a" style="left:862.5px;top:671.5px;width:23.5px;height:23.5px;background:#f1f1f1;border-radius:5px;box-shadow:inset 0 0 0 1px #dddddd"></div>
<div class="t dt" id="dApply" style="left:898.00px;top:673.30px;color:#b0b0b0;letter-spacing:0.70px">Apply these changes to all other cells with the same settings</div>
<!-- buttons -->
<div class="btn" style="left:808.5px;width:123px"></div>
<div class="t dt" id="bClear" style="left:826.00px;top:780.20px;letter-spacing:0.56px">Clear All</div>
<div class="btn" style="left:1436.5px;width:107.5px"></div>
<div class="t dt" id="bCancel" style="left:1455.20px;top:780.00px;letter-spacing:0.40px">Cancel</div>
<div class="a" style="left:1564px;top:775px;width:107px;height:34px;background:linear-gradient(#237b4a,#1a6b3d);border-radius:8px;box-shadow:0 0.5px 1px rgba(0,0,0,.2)"></div>
<div class="t dt" id="bOK" style="left:1602.40px;top:780.00px;color:#eef8ef;letter-spacing:-2.00px">OK</div>
</body></html>
